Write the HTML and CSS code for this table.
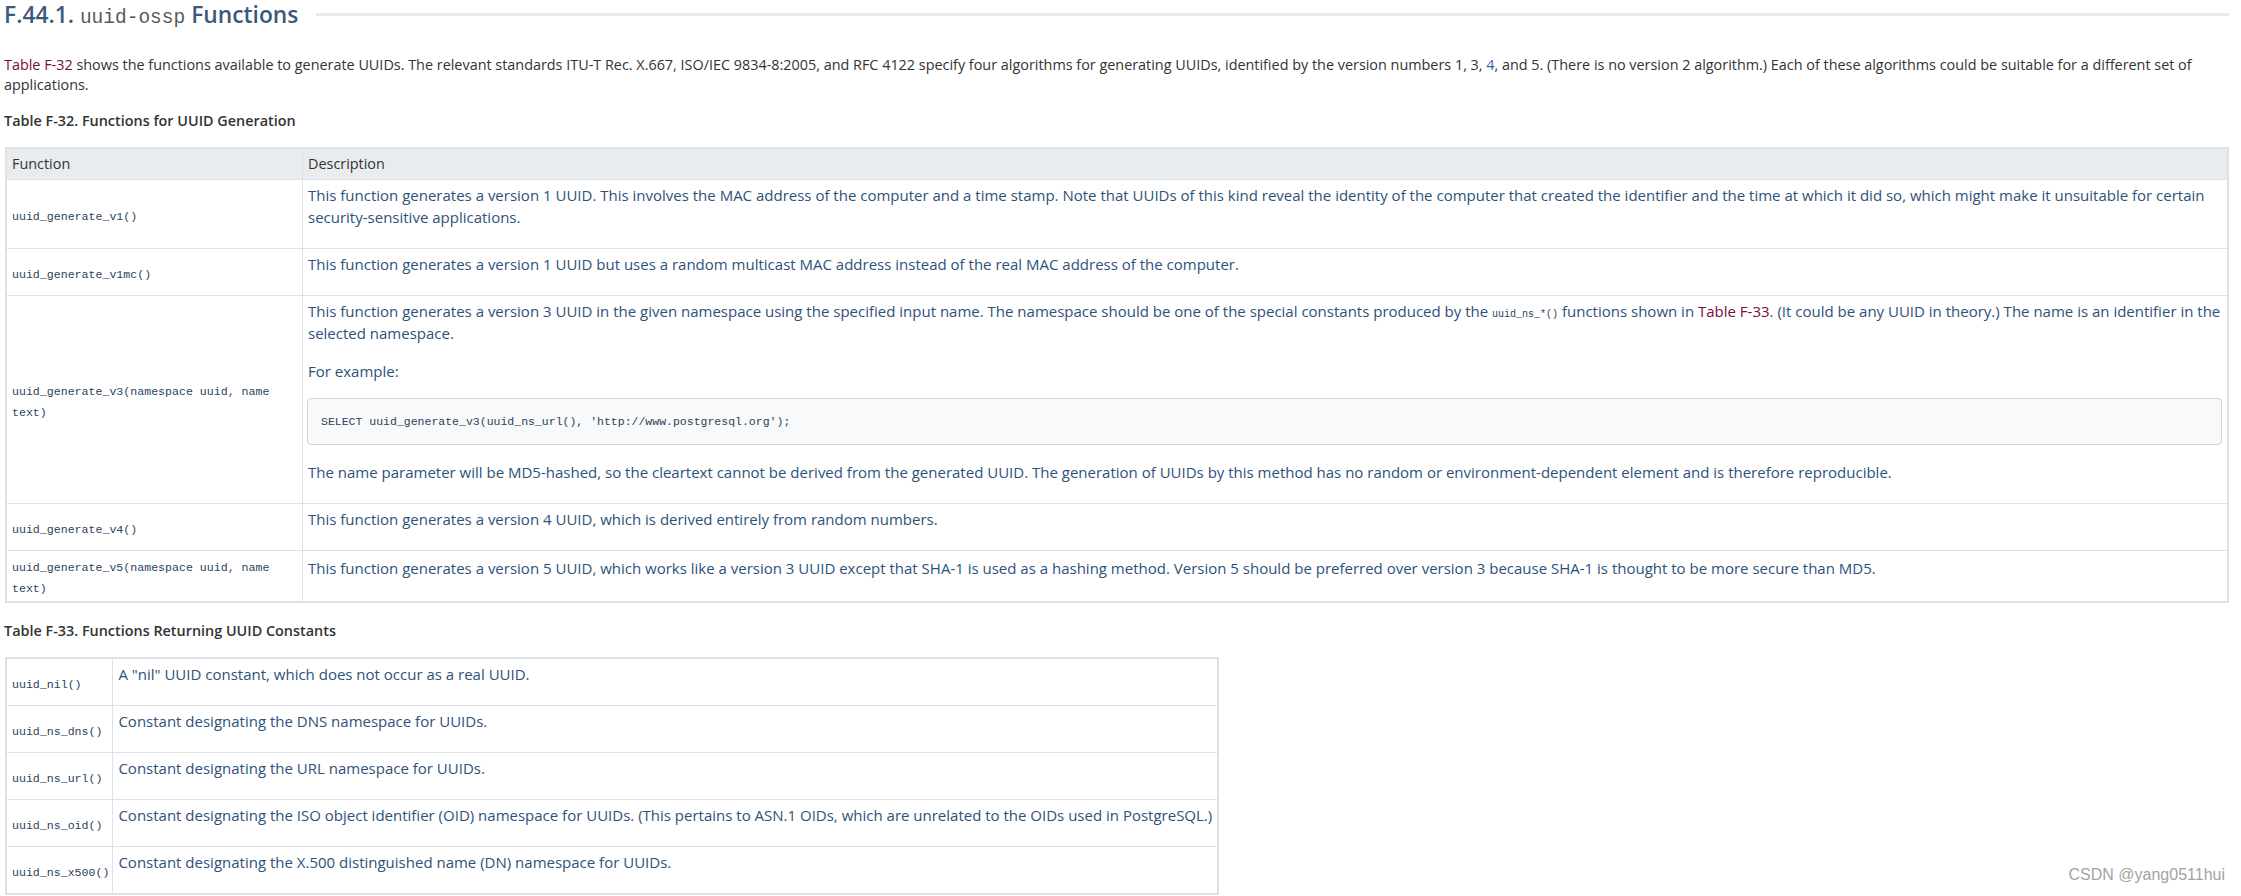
FILE: index.html
```html
<!DOCTYPE html>
<html>
<head>
<meta charset="utf-8">
<link rel="stylesheet" href="styles.css">
</head>
<body>
<div class="sect">
	<h2 class="title"><span>F.44.1. <code class="lit">uuid-ossp</code> Functions</span><span class="rule"></span></h2>

	<p><a href="#t32">Table F-32</a> shows the functions available to generate UUIDs. The relevant standards ITU-T Rec. X.667, ISO/IEC 9834-8:2005, and RFC 4122 specify four algorithms for generating UUIDs, identified by the version numbers 1, 3, <a href="#" class="num">4</a>, and 5. (There is no version 2 algorithm.) Each of these algorithms could be suitable for a different set of applications.</p>

	<p class="caption" id="t32">Table F-32. Functions for UUID Generation</p>
	<table class="tbl wide">
		<tr>
			<th class="fn">Function</th>
			<th>Description</th>
		</tr>
		<tr>
			<td class="fn"><code>uuid_generate_v1()</code></td>
			<td><p>This function generates a version 1 UUID. This involves the MAC address of the computer and a time stamp. Note that UUIDs of this kind reveal the identity of the computer that created the identifier and the time at which it did so, which might make it unsuitable for certain security-sensitive applications.</p></td>
		</tr>
		<tr>
			<td class="fn"><code>uuid_generate_v1mc()</code></td>
			<td><p>This function generates a version 1 UUID but uses a random multicast MAC address instead of the real MAC address of the computer.</p></td>
		</tr>
		<tr>
			<td class="fn"><code>uuid_generate_v3(namespace uuid, name text)</code></td>
			<td>
				<p>This function generates a version 3 UUID in the given namespace using the specified input name. The namespace should be one of the special constants produced by the <code class="small">uuid_ns_*()</code> functions shown in <a href="#t33">Table F-33</a>. (It could be any UUID in theory.) The name is an identifier in the selected namespace.</p>
				<p>For example:</p>
<pre>SELECT uuid_generate_v3(uuid_ns_url(), 'http://www.postgresql.org');</pre>
				<p>The name parameter will be MD5-hashed, so the cleartext cannot be derived from the generated UUID. The generation of UUIDs by this method has no random or environment-dependent element and is therefore reproducible.</p>
			</td>
		</tr>
		<tr>
			<td class="fn"><code>uuid_generate_v4()</code></td>
			<td><p>This function generates a version 4 UUID, which is derived entirely from random numbers.</p></td>
		</tr>
		<tr>
			<td class="fn"><code>uuid_generate_v5(namespace uuid, name text)</code></td>
			<td><p>This function generates a version 5 UUID, which works like a version 3 UUID except that SHA-1 is used as a hashing method. Version 5 should be preferred over version 3 because SHA-1 is thought to be more secure than MD5.</p></td>
		</tr>
	</table>

	<p class="caption" id="t33">Table F-33. Functions Returning UUID Constants</p>
	<table class="tbl">
		<tr>
			<td class="fn2"><code>uuid_nil()</code></td>
			<td><p>A "nil" UUID constant, which does not occur as a real UUID.</p></td>
		</tr>
		<tr>
			<td class="fn2"><code>uuid_ns_dns()</code></td>
			<td><p>Constant designating the DNS namespace for UUIDs.</p></td>
		</tr>
		<tr>
			<td class="fn2"><code>uuid_ns_url()</code></td>
			<td><p>Constant designating the URL namespace for UUIDs.</p></td>
		</tr>
		<tr>
			<td class="fn2"><code>uuid_ns_oid()</code></td>
			<td><p>Constant designating the ISO object identifier (OID) namespace for UUIDs. (This pertains to ASN.1 OIDs, which are unrelated to the OIDs used in PostgreSQL.)</p></td>
		</tr>
		<tr>
			<td class="fn2"><code>uuid_ns_x500()</code></td>
			<td><p>Constant designating the X.500 distinguished name (DN) namespace for UUIDs.</p></td>
		</tr>
	</table>
</div>
<div class="mark">CSDN @yang0511hui</div>
</body>
</html>
```

FILE: styles.css
```css
body {
  margin: 0;
  padding: 0 12px 0 4px;
  font-family: "Open Sans", "Noto Sans", sans-serif;
  font-size: 14.4px;
  color: #333;
  background: #fff;
}
a {
  color: #7a0c3e;
  text-decoration: none;
}
a.num {
  color: #2a6aa8;
}
code, pre {
  font-family: "Liberation Mono", "DejaVu Sans Mono", monospace;
}
/* section heading with the grey line after it */
.title {
  display: flex;
  align-items: center;
  margin: 0;
  font-size: 22.8px;
  line-height: 30px;
  font-weight: 600;
  color: #3b5a7b;
}
.title .lit {
  font-size: 19.5px;
  font-weight: normal;
  color: #5a5a5a;
}
.title .rule {
  flex: 1;
  height: 3px;
  margin: -4px 0 0 18px;
  background: #e9e9e9;
}
.sect > p {
  margin: 22px 0 0 0;
  line-height: 20px;
}
.sect > p.caption {
  margin: 16px 0 16px 0;
  line-height: 20px;
  font-weight: 600;
}
.tbl {
  border-collapse: collapse;
  border: 2px solid #dfe2e5;
  margin-left: 1px;
  margin-bottom: 18px;
}
.tbl.wide {
  width: calc(100% - 1px);
}
.tbl th {
  background: #e9ecef;
  font-weight: normal;
  text-align: left;
  padding: 4px 6px 4px 5px;
  line-height: 22px;
  border: 1px solid #dfe2e5;
}
.tbl td {
  padding: 4px 5px 4px 5px;
  line-height: 22px;
  vertical-align: middle;
  border: 1px solid #dfe2e5;
  color: #2e5279;
}
.tbl td.fn, .tbl td.fn2 {
  line-height: 21px;
}
.tbl td.fn2 {
  padding-right: 3px;
}
.tbl th.fn, .tbl td.fn {
  width: 284px;
}
.tbl td code {
  font-size: 11.6px;
  line-height: 1;
  color: #2b4360;
}
.tbl td p {
  margin: 0 0 16px 0;
  font-size: 15px;
  font-weight: 500;
}
.tbl td code.small {
  font-size: 10px;
}
.tbl pre {
  margin: 0 0 16px -1px;
  padding: 12px 13px;
  font-size: 11.5px;
  line-height: 21px;
  color: #2b4360;
  background: #f8f9fa;
  border: 1px solid #cfd3d8;
  border-radius: 4px;
}
.mark {
  position: absolute;
  right: 16px;
  top: 866px;
  font-family: "Liberation Sans", sans-serif;
  font-size: 16px;
  color: #a3a3a3;
}
```
